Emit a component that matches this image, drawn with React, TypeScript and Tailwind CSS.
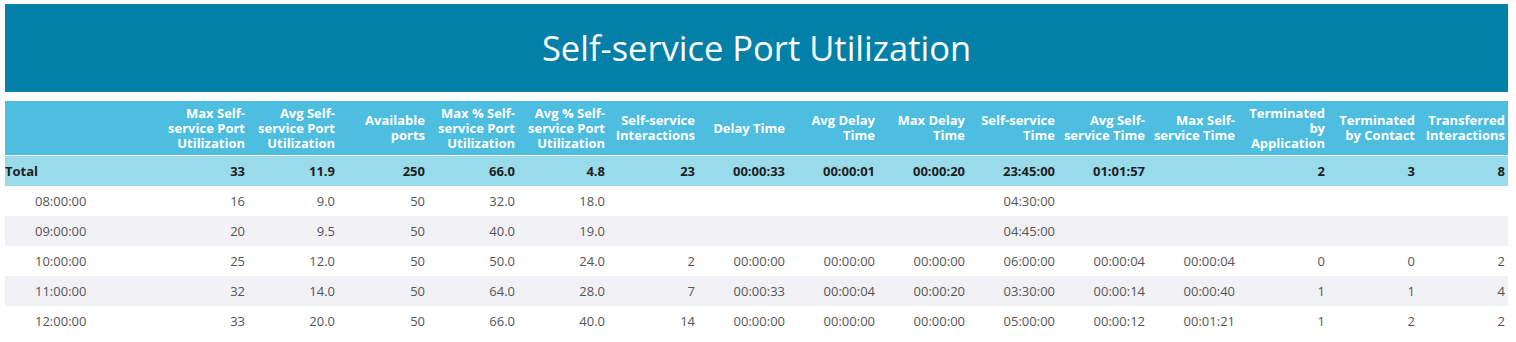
import React from 'react';

const HEADERS = [
  '',
  'Max Self-service Port Utilization',
  'Avg Self-service Port Utilization',
  'Available ports',
  'Max % Self-service Port Utilization',
  'Avg % Self-service Port Utilization',
  'Self-service Interactions',
  'Delay Time',
  'Avg Delay Time',
  'Max Delay Time',
  'Self-service Time',
  'Avg Self-service Time',
  'Max Self-service Time',
  'Terminated by Application',
  'Terminated by Contact',
  'Transferred Interactions',
];

const TOTAL = ['Total', '33', '11.9', '250', '66.0', '4.8', '23', '00:00:33', '00:00:01', '00:00:20', '23:45:00', '01:01:57', '', '2', '3', '8'];

const ROWS = [
  ['08:00:00', '16', '9.0', '50', '32.0', '18.0', '', '', '', '', '04:30:00', '', '', '', '', ''],
  ['09:00:00', '20', '9.5', '50', '40.0', '19.0', '', '', '', '', '04:45:00', '', '', '', '', ''],
  ['10:00:00', '25', '12.0', '50', '50.0', '24.0', '2', '00:00:00', '00:00:00', '00:00:00', '06:00:00', '00:00:04', '00:00:04', '0', '0', '2'],
  ['11:00:00', '32', '14.0', '50', '64.0', '28.0', '7', '00:00:33', '00:00:04', '00:00:20', '03:30:00', '00:00:14', '00:00:40', '1', '1', '4'],
  ['12:00:00', '33', '20.0', '50', '66.0', '40.0', '14', '00:00:00', '00:00:00', '00:00:00', '05:00:00', '00:00:12', '00:01:21', '1', '2', '2'],
];

const cols = 'grid grid-cols-[153px_repeat(15,90px)]';

const App: React.FC = () => {
  return (
    <div className="w-[1516px] h-[342px] bg-white pt-[4px] px-[5px] overflow-hidden font-['Open_Sans',sans-serif]">
      {/* Report title banner */}
      <div className="w-[1503px] h-[88px] bg-[#0380a8] flex items-center justify-center">
        <h1 className="text-[34.5px] text-white font-normal leading-none">Self-service Port Utilization</h1>
      </div>

      <div className="w-[1503px] mt-[9px] overflow-hidden">
        {/* Column headers */}
        <div className={`${cols} h-[55px] bg-[#4dbde0] border-b border-white`}>
          {HEADERS.map((h, i) => (
            <div key={i} className="flex items-center justify-end pr-[3px] text-right text-[13px] leading-[15px] font-bold text-white">
              <span>{h}</span>
            </div>
          ))}
        </div>

        {/* Total */}
        <div className={`${cols} h-[30px] pt-[1px] bg-[#9adbeb] text-[13px] font-bold text-[#1e1e1e]`}>
          {TOTAL.map((v, i) => (
            <div key={i} className={i === 0 ? 'flex items-center' : 'flex items-center justify-end pr-[3px] whitespace-nowrap'}>
              {v}
            </div>
          ))}
        </div>

        {/* Hourly rows */}
        {ROWS.map((row, r) => (
          <div key={r} className={`${cols} h-[30px] pt-[1px] text-[13px] text-[#555] ${r % 2 === 1 ? 'bg-[#f2f2f6]' : 'bg-white'}`}>
            {row.map((v, i) => (
              <div key={i} className={i === 0 ? 'flex items-center pl-[30px]' : 'flex items-center justify-end pr-[3px] whitespace-nowrap'}>
                {v}
              </div>
            ))}
          </div>
        ))}
      </div>
    </div>
  );
};

export default App;
